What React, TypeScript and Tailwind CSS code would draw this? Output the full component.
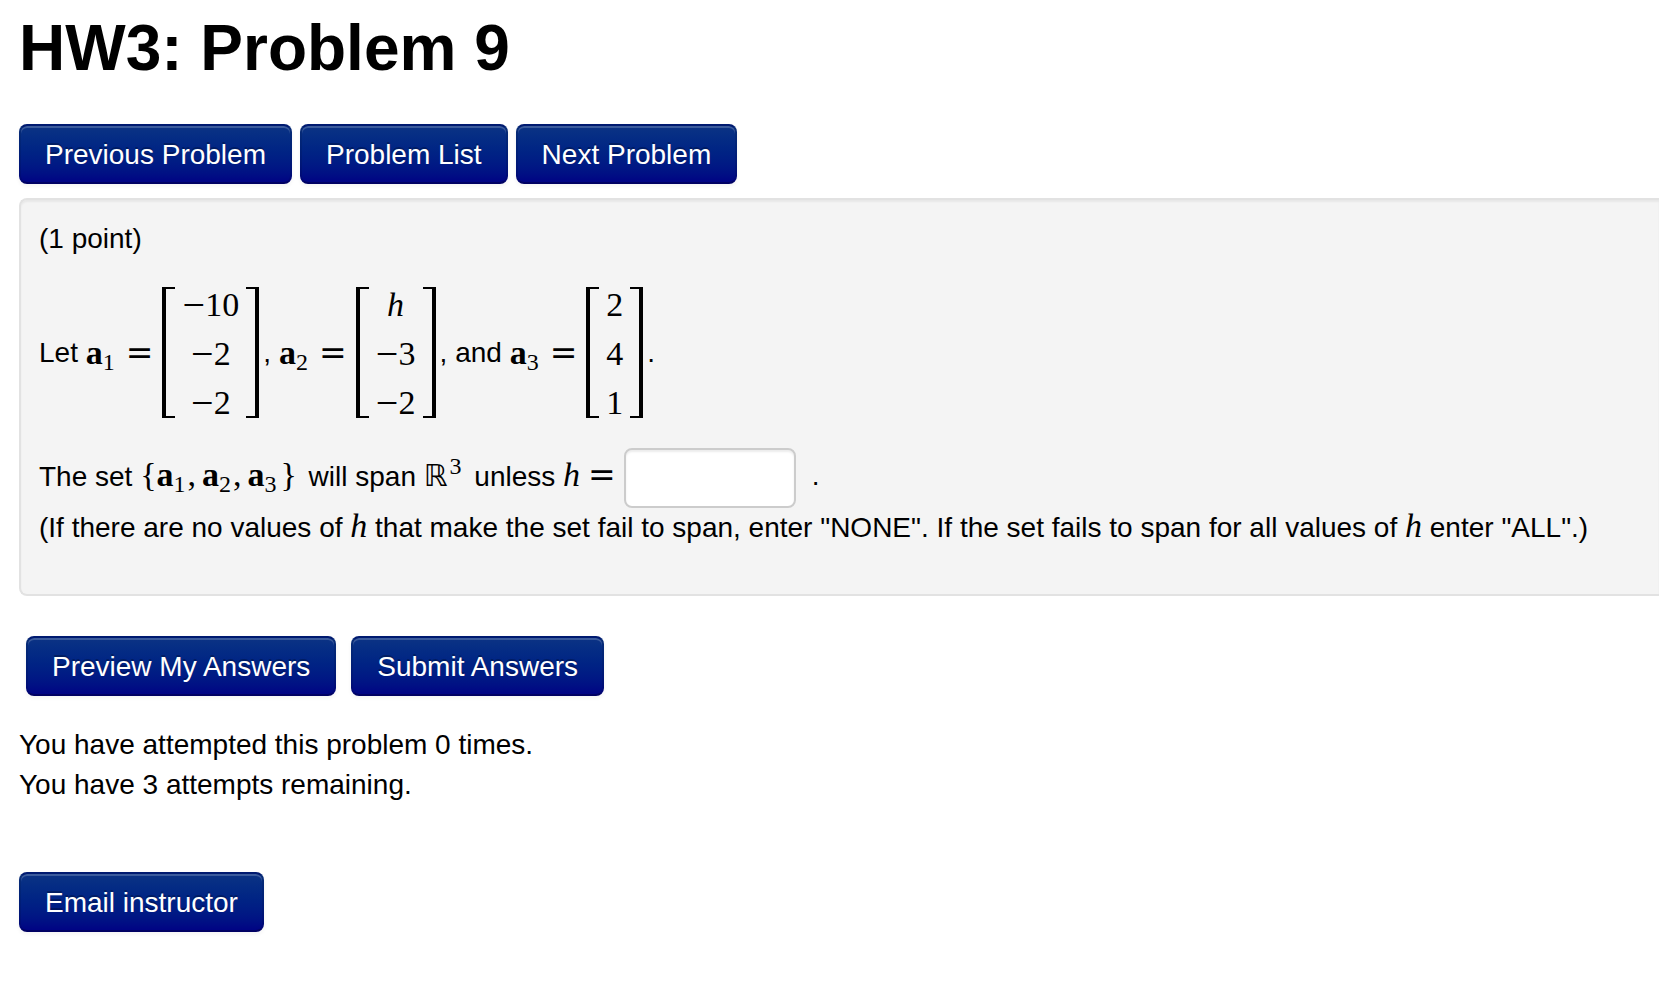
import type { ReactNode } from 'react'
import clsx from 'clsx'

type ActionButtonProps = {
  type?: 'button' | 'submit'
  children: ReactNode
}

const ActionButton = ({ type = 'button', children }: ActionButtonProps) => (
  <button
    type={type}
    className="rounded-lg border-2 border-x-black/10 border-t-[#001a70] border-b-black/25 bg-linear-to-b from-[#0d3484] to-[#000084] bg-origin-border px-6 pt-[9px] pb-[7px] leading-10 whitespace-nowrap text-white shadow-[inset_0_2px_0_rgba(255,255,255,0.2),0_2px_4px_rgba(0,0,0,0.05)] text-shadow-[0_-2px_0_rgba(0,0,0,0.25)]"
  >
    {children}
  </button>
)

const MathText = ({ className, children }: { className?: string; children: ReactNode }) => (
  <span className={clsx('font-[Liberation_Serif,serif] text-[34px]', className)}>
    {children}
  </span>
)

// bold "a" with a light subscript
const Vector = ({ index }: { index: number }) => (
  <MathText>
    <b>a</b>
    <sub className="text-[24px]">{index}</sub>
  </MathText>
)

const Equals = ({ className }: { className: string }) => (
  <span className={clsx('font-[DejaVu_Sans,sans-serif] text-[33px]', className)}>=</span>
)

const Variable = () => <MathText className="leading-none italic">h</MathText>

const Entry = ({ value }: { value: string }) => {
  const negative = value.startsWith('-')

  return (
    <span className="flex justify-center">
      {negative && <span className="w-[23px] text-center text-[40px]">−</span>}
      <span className={clsx(value === 'h' && 'italic')}>
        {negative ? value.slice(1) : value}
      </span>
    </span>
  )
}

const Matrix = ({ entries }: { entries: string[] }) => (
  <span className="mx-1 flex h-[131px]">
    <span className="w-[13px] border-y-2 border-l-4 border-black" />
    <MathText className="grid content-center px-[7px] pt-[2px] leading-[49px]">
      {entries.map((entry, i) => <Entry key={i} value={entry} />)}
    </MathText>
    <span className="w-[13px] border-y-2 border-r-4 border-black" />
  </span>
)

const App = () => {
  return (
    <main className="pl-[19px] font-[Liberation_Sans,Arial,sans-serif] text-[28px] leading-10 text-black">
      <h1 className="pt-2 text-[64px] leading-20 font-bold">HW3: Problem 9</h1>

      <nav className="mt-9 flex gap-2">
        <ActionButton>Previous Problem</ActionButton>
        <ActionButton>Problem List</ActionButton>
        <ActionButton>Next Problem</ActionButton>
      </nav>

      <form>
        <section className="mt-[14px] rounded-l-lg border-2 border-r-0 border-[#e2e2e2] bg-[#f4f4f4] px-[18px] pt-[19px] pb-[46px] shadow-[inset_0_2px_2px_rgba(0,0,0,0.05)]">
          <p>(1 point)</p>

          <div className="mt-7 flex items-center whitespace-pre">
            <span>Let </span>
            <Vector index={1} />
            <Equals className="mr-[5px] ml-[11px]" />
            <Matrix entries={['-10', '-2', '-2']} />
            <span>, </span>
            <Vector index={2} />
            <Equals className="mr-[5px] ml-[11px]" />
            <Matrix entries={['h', '-3', '-2']} />
            <span>, and </span>
            <Vector index={3} />
            <Equals className="mr-[5px] ml-[11px]" />
            <Matrix entries={['2', '4', '1']} />
            <span>.</span>
          </div>

          <div className="mt-[30px] flex items-start">
            <label htmlFor="answer" className="flex h-[60px] items-baseline leading-[54px] whitespace-pre">
              <span>The set </span>
              <MathText>{'{'}</MathText>
              <Vector index={1} />
              <MathText className="mr-[6px] ml-[2px]">,</MathText>
              <Vector index={2} />
              <MathText className="mr-[6px] ml-[2px]">,</MathText>
              <Vector index={3} />
              <MathText className="mx-1">{'}'}</MathText>
              <span> will span </span>
              <span className="mr-[2px] font-[DejaVu_Sans,sans-serif] text-[30px]">ℝ</span>
              <MathText className="mr-[5px]"><sup className="text-[24px]">3</sup></MathText>
              <span> unless </span>
              <Variable />
              <Equals className="mx-2" />
            </label>
            <input
              id="answer"
              type="text"
              className="h-[60px] w-[172px] rounded-lg border-2 border-[#cccccc] bg-white px-3 shadow-[inset_0_2px_2px_rgba(0,0,0,0.075)]"
            />
            <span className="ml-4 leading-[56px]">.</span>
          </div>

          <p>
            (If there are no values of <Variable /> that make the set fail to span, enter "NONE". If the set fails to span for all values of <Variable /> enter "ALL".)
          </p>
        </section>

        <div className="mt-10 ml-[7px] flex gap-[15px]">
          <ActionButton>Preview My Answers</ActionButton>
          <ActionButton type="submit">Submit Answers</ActionButton>
        </div>
      </form>

      <p className="mt-[29px]">
        You have attempted this problem 0 times.
        <br />
        You have 3 attempts remaining.
      </p>

      <div className="mt-[67px] pb-12">
        <ActionButton>Email instructor</ActionButton>
      </div>
    </main>
  )
}

export default App
